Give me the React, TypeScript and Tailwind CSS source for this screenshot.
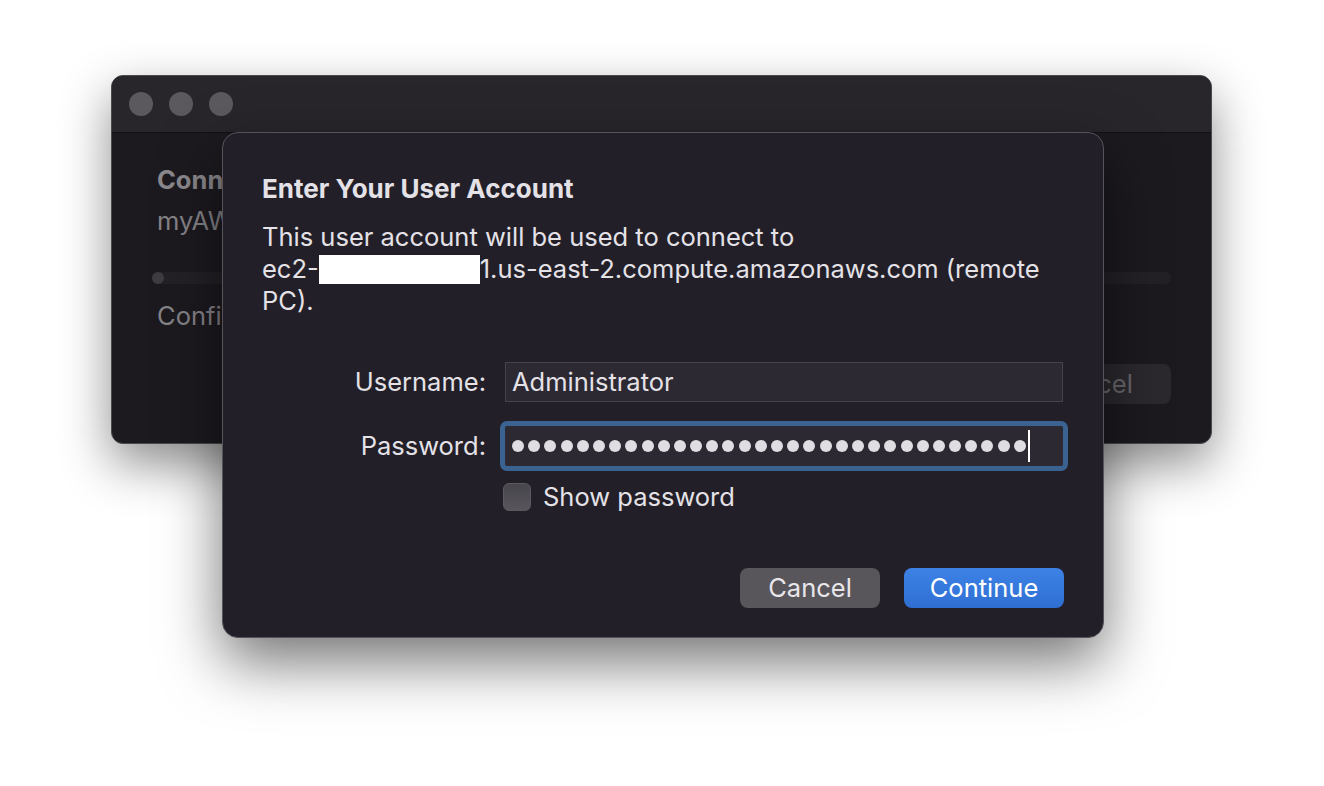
import React from "react"

const font = { fontFamily: "Inter, 'Noto Sans', sans-serif" }

// background window, partly covered by the sheet
function BackWindow() {
  return (
    <div className="absolute left-[111px] top-[75px] w-[1101px] h-[369px] rounded-[12px] bg-[#1c1a1f] border border-[#4a4a4c] shadow-[0_20px_50px_rgba(0,0,0,0.45)] overflow-hidden">
      <div className="h-[57px] bg-[#28262b] border-b border-[#111013] flex items-center gap-[16px] pl-[17px]">
        <span className="w-[24px] h-[24px] rounded-full bg-[#5b595e]" />
        <span className="w-[24px] h-[24px] rounded-full bg-[#5b595e]" />
        <span className="w-[24px] h-[24px] rounded-full bg-[#5b595e]" />
      </div>
      <div className="px-[45px] pt-[31px] text-[25.5px] text-[#858388]">
        {/* only the left edge of these peeks out from under the sheet */}
        <div className="w-[65px] overflow-hidden whitespace-nowrap">
          <div className="font-bold leading-[32px] text-[#8a888d]">Connecting</div>
          <div className="leading-[32px] mt-[9px]">myAWS</div>
        </div>
        <div className="mt-[35px] -mx-[5px] h-[12px] rounded-full bg-[#232126] flex items-center">
          <span className="w-[12px] h-[12px] rounded-full bg-[#3e3c41]" />
        </div>
        <div className="w-[65px] overflow-hidden whitespace-nowrap leading-[32px] mt-[16px]">Configuring</div>
        <div className="flex justify-end mt-[32px] -mr-[5px]">
          <div className="w-[160px] h-[40px] rounded-[8px] bg-[#2b292e] text-[#69676c] flex items-center justify-center">Cancel</div>
        </div>
      </div>
    </div>
  )
}

function Dialog() {
  const dots = Array.from({ length: 32 })
  return (
    <div className="absolute left-[222px] top-[132px] w-[882px] h-[506px] rounded-[16px] bg-[#221f28] border border-[#56535a] shadow-[0_24px_60px_rgba(0,0,0,0.55)] text-[#e4e2e7] px-[39px]">
      <div className="pt-[41px] text-[26px] font-bold leading-[30px]">Enter Your User Account</div>
      <div className="mt-[17px] text-[25.5px] leading-[32px] w-[800px]">
        This user account will be used to connect to
        <br />
        ec2-<span className="inline-block align-middle w-[161px] h-[29px] bg-white -mt-[4px]" />1.us-east-2.compute.amazonaws.com (remote
        <br />
        PC).
      </div>

      <div className="mt-[45px] grid grid-cols-[224px_558px] gap-x-[19px] items-center text-[25.5px]">
        <div className="text-right">Username:</div>
        <div className="h-[40px] bg-[#2c2933] border border-[#46434b] flex items-center px-[6px]">Administrator</div>

        <div className="text-right mt-[24px]">Password:</div>
        <div className="mt-[24px] h-[40px] bg-[#2c2933] outline-[5px] outline-solid outline-[#3a6391] rounded-[2px] flex items-center pl-[7px] gap-[4.2px]">
          {dots.map((_, i) => (
            <span key={i} className="w-[12px] h-[12px] rounded-full bg-[#dfdde2] shrink-0" />
          ))}
          <span className="-ml-[2px] w-[2px] h-[32px] bg-white" />
        </div>

        <div />
        <label className="mt-[12px] flex items-center gap-[12px] -ml-[2px]">
          <span className="w-[28px] h-[28px] rounded-[6px] bg-gradient-to-b from-[#48464d] to-[#58565c] border border-[#5c5a60]" />
          <span>Show password</span>
        </label>
      </div>

      <div className="mt-[52px] flex justify-end gap-[24px] text-[25.5px]">
        <div className="w-[140px] h-[40px] rounded-[8px] bg-[#58565b] flex items-center justify-center text-[#e8e6ea]">Cancel</div>
        <div className="w-[160px] h-[40px] rounded-[8px] bg-gradient-to-b from-[#3d82e6] to-[#2f6fd4] flex items-center justify-center text-white">Continue</div>
      </div>
    </div>
  )
}

export default function App() {
  return (
    <div className="relative w-[1324px] h-[786px] bg-white overflow-hidden" style={font}>
      <BackWindow />
      <Dialog />
    </div>
  )
}
